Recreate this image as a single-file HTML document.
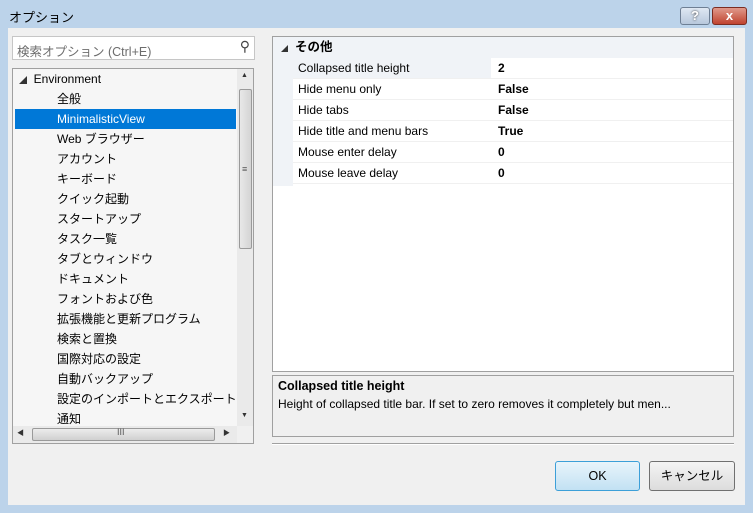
<!DOCTYPE html>
<html><head><meta charset="utf-8"><style>
*{box-sizing:border-box;margin:0;padding:0}
body{width:753px;height:513px;overflow:hidden;background:#bcd3ea;font-family:"Liberation Sans","Noto Sans CJK JP",sans-serif;font-size:12px;color:#000;position:relative}
.abs{position:absolute}
.title{left:9px;top:7px;font-size:13px}
.client{left:8px;top:28px;width:737px;height:477px;background:#f0f0f0}
.search{left:12px;top:36px;width:243px;height:24px;background:#fff;border:1px solid #c6c6c6;color:#6d6d6d;padding:4px 0 0 4px;font-size:12.5px}
.tree{left:12px;top:68px;width:242px;height:376px;background:#f6f6f6;border:1px solid #a0a0a0;overflow:hidden}
.item{position:absolute;left:2px;width:221px;height:20px;line-height:20px;font-size:12px;white-space:nowrap;overflow:hidden}
.sel{background:#0078d7;color:#fff}
.vs{left:224px;top:0;width:17px;height:357px;background:#eaeaea}
.thumb{left:226px;top:20px;width:13px;height:160px;background:linear-gradient(90deg,#e8e8e8,#d4d4d4);border:1px solid #9a9a9a;border-radius:2px}
.hs{left:0;top:357px;width:224px;height:17px;background:#eaeaea}
.hthumb{left:19px;top:359px;width:183px;height:13px;background:linear-gradient(#ececec,#d0d0d0);border:1px solid #9a9a9a;border-radius:2px}
.grid{left:272px;top:36px;width:462px;height:336px;background:#fff;border:1px solid #a0a0a0}
.row{position:absolute;left:20px;width:440px;height:21px;line-height:20px;font-size:12px;border-bottom:1px solid #f0f0f0}
.nm{position:absolute;left:5px}
.v{position:absolute;left:205px;font-weight:bold}
.desc{left:272px;top:375px;width:462px;height:62px;border:1px solid #a0a0a0;background:#f0f0f0;padding:3px 5px;font-size:12px}
.btn{height:30px;border-radius:3px;text-align:center;line-height:28px;font-size:12.5px}
</style></head><body>
<div class="abs title">オプション</div>
<div class="abs" style="left:680px;top:7px;width:30px;height:18px;border:1px solid #6e7f94;border-radius:3px;background:linear-gradient(#dfe8f3,#b8c8dc);text-align:center;font-size:13px;line-height:16px;color:#fff;font-weight:bold;text-shadow:0 0 2px #333">?</div>
<div class="abs" style="left:712px;top:7px;width:35px;height:18px;border:1px solid #7b2d22;border-radius:3px;background:linear-gradient(#e09a8c,#c0432f);text-align:center;font-size:13px;line-height:16px;color:#fff;font-weight:bold">x</div>
<div class="abs client"></div>
<div class="abs search">検索オプション (Ctrl+E)<span style="position:absolute;right:4px;top:1px;color:#444;font-size:14px">&#9906;</span></div>
<div class="abs tree">
<div class="item" style="top:0;padding-left:4px"><span style="font-size:8px;color:#333">◢</span> &nbsp;Environment</div>
<div class="item" style="top:20px;padding-left:42px">全般</div>
<div class="item sel" style="top:40px;padding-left:42px">MinimalisticView</div>
<div class="item" style="top:60px;padding-left:42px">Web ブラウザー</div>
<div class="item" style="top:80px;padding-left:42px">アカウント</div>
<div class="item" style="top:100px;padding-left:42px">キーボード</div>
<div class="item" style="top:120px;padding-left:42px">クイック起動</div>
<div class="item" style="top:140px;padding-left:42px">スタートアップ</div>
<div class="item" style="top:160px;padding-left:42px">タスク一覧</div>
<div class="item" style="top:180px;padding-left:42px">タブとウィンドウ</div>
<div class="item" style="top:200px;padding-left:42px">ドキュメント</div>
<div class="item" style="top:220px;padding-left:42px">フォントおよび色</div>
<div class="item" style="top:240px;padding-left:42px">拡張機能と更新プログラム</div>
<div class="item" style="top:260px;padding-left:42px">検索と置換</div>
<div class="item" style="top:280px;padding-left:42px">国際対応の設定</div>
<div class="item" style="top:300px;padding-left:42px">自動バックアップ</div>
<div class="item" style="top:320px;padding-left:42px">設定のインポートとエクスポート</div>
<div class="item" style="top:340px;padding-left:42px">通知</div>
<div class="abs vs"></div><div class="abs thumb"></div>
<div class="abs" style="left:228px;top:3px;font-size:7px;color:#333">▲</div>
<div class="abs" style="left:228px;top:343px;font-size:7px;color:#333">▼</div>
<div class="abs" style="left:229px;top:95px;font-size:9px;color:#555">≡</div>
<div class="abs hs"></div><div class="abs hthumb"></div>
<div class="abs" style="left:4px;top:359px;font-size:7px;color:#333">◀</div>
<div class="abs" style="left:210px;top:359px;font-size:7px;color:#333">▶</div>
<div class="abs" style="left:104px;top:358px;font-size:9px;color:#555">III</div>
<div class="abs" style="left:224px;top:357px;width:17px;height:17px;background:#f0f0f0"></div>
</div>
<div class="abs grid">
<div class="abs" style="left:0;top:0;width:20px;height:149px;background:#f0f3f7"></div>
<div class="abs" style="left:0;top:0;width:460px;height:21px;background:#f0f3f7;font-weight:bold;line-height:20px;font-size:12.5px;padding-left:8px"><span style="font-size:7px;color:#333">◢</span> &nbsp;その他</div>
<div class="row" style="top:21px"><div class="abs" style="left:0;top:0;width:198px;height:20px;background:#f0f3f7"></div><span class="nm">Collapsed title height</span><span class="v">2</span></div>
<div class="row" style="top:42px"><span class="nm">Hide menu only</span><span class="v">False</span></div>
<div class="row" style="top:63px"><span class="nm">Hide tabs</span><span class="v">False</span></div>
<div class="row" style="top:84px"><span class="nm">Hide title and menu bars</span><span class="v">True</span></div>
<div class="row" style="top:105px"><span class="nm">Mouse enter delay</span><span class="v">0</span></div>
<div class="row" style="top:126px"><span class="nm">Mouse leave delay</span><span class="v">0</span></div>
</div>
<div class="abs desc"><div style="font-weight:bold;font-size:12.5px">Collapsed title height</div><div style="margin-top:4px;white-space:nowrap">Height of collapsed title bar. If set to zero removes it completely but men...</div></div>
<div class="abs" style="left:272px;top:443px;width:462px;height:2px;border-top:1px solid #a0a0a0;border-bottom:1px solid #fff"></div>
<div class="abs btn" style="left:555px;top:461px;width:85px;border:1px solid #3c9fd8;background:linear-gradient(#e8f4fb,#c2e1f3)">OK</div>
<div class="abs btn" style="left:649px;top:461px;width:86px;border:1px solid #707070;background:linear-gradient(#f4f4f4,#dcdcdc)">キャンセル</div>
</body></html>
